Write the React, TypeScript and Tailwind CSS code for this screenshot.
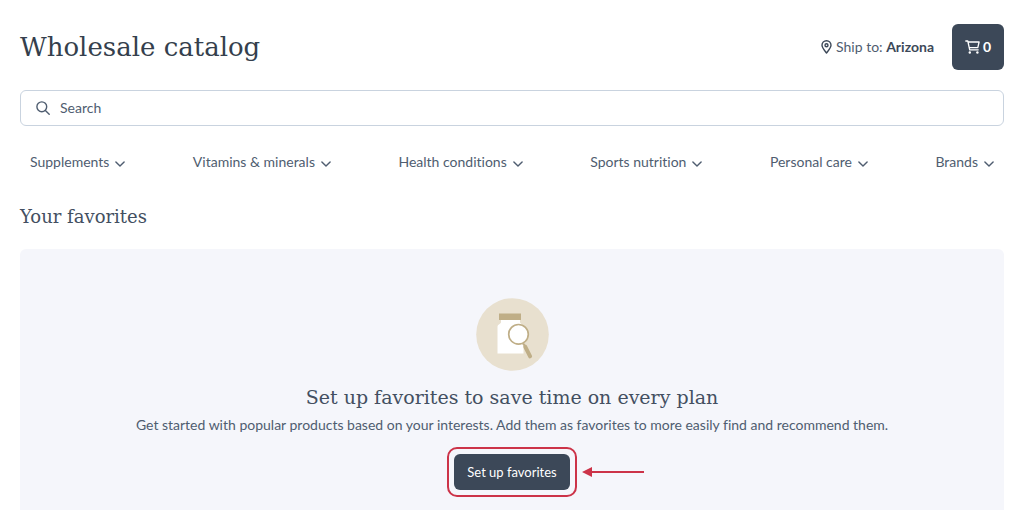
const categories = [
  "Supplements",
  "Vitamins & minerals",
  "Health conditions",
  "Sports nutrition",
  "Personal care",
  "Brands",
];

function PinIcon() {
  return (
    <svg className="h-[14px] w-[11px]" viewBox="0 0 11 14" fill="none" stroke="currentColor" strokeWidth="1.4" aria-hidden="true">
      <path d="M5.5 13C4.2 11.2 1 7.9 1 5.3a4.5 4.5 0 0 1 9 0C10 7.9 6.8 11.2 5.5 13Z" strokeLinejoin="round" />
      <circle cx="5.5" cy="5.2" r="1.5" />
    </svg>
  );
}

function CartIcon() {
  return (
    <svg className="h-[14px] w-[15px]" viewBox="0 0 15 14" fill="none" stroke="currentColor" strokeWidth="1.3" strokeLinecap="round" strokeLinejoin="round" aria-hidden="true">
      <path d="M.8 1h2l1.900 8.800h8.500M3.100 2h11l-1.300 5.600H4.300" />
      <circle cx="4.8" cy="12.5" r="1.2" fill="currentColor" stroke="none" />
      <circle cx="12.4" cy="12.5" r="1.2" fill="currentColor" stroke="none" />
    </svg>
  );
}

function SearchIcon() {
  return (
    <svg className="h-[14px] w-[14px]" viewBox="0 0 14 14" fill="none" stroke="currentColor" strokeWidth="1.4" strokeLinecap="round" aria-hidden="true">
      <circle cx="5.8" cy="5.8" r="4.9" />
      <path d="m9.400 9.400 3.800 3.800" />
    </svg>
  );
}

function ChevronIcon() {
  return (
    <svg className="mt-[3px] h-[6px] w-[10px]" viewBox="0 0 10 6" fill="none" stroke="currentColor" strokeWidth="1.4" strokeLinecap="round" strokeLinejoin="round" aria-hidden="true">
      <path d="m.9.900 4.100 4.200L9.100.900" />
    </svg>
  );
}

function JarIllustration() {
  return (
    <svg className="h-[73px] w-[73px]" viewBox="0 0 73 73" aria-hidden="true">
      <circle cx="36.5" cy="36.5" r="36.3" fill="#e8e0cf" />
      <path d="M25 22h19v2c0 2 3.500 2 3.500 5v26.500h-26V29c0-3 3.500-3 3.500-5Z" fill="#fff" />
      <path d="M23 15.500h22V22H23Z" fill="#bfae87" />
      <circle cx="42.5" cy="36.3" r="9.8" fill="#fff" stroke="#bfae87" strokeWidth="1.7" />
      <path d="m47 45.500 1.800 2.200" stroke="#bfae87" strokeWidth="2" />
      <path d="m49.300 48.800 4.800 9.500" stroke="#bfae87" strokeWidth="4" strokeLinecap="round" />
    </svg>
  );
}

export default function App() {
  return (
    <div className="flex min-h-screen flex-col bg-white px-5 pt-6 font-['Lato',sans-serif] text-sm leading-5 text-[#4f5d70] [font-variant-ligatures:none]">
      <header className="flex items-center justify-between">
        <h1 className="font-['DejaVu_Serif',serif] text-[26px] leading-10 text-[#353f4d]">Wholesale catalog</h1>
        <div className="flex items-center gap-[18px]">
          <button type="button" className="flex items-center gap-1">
            <span className="text-[#3c4858]"><PinIcon /></span>
            <span>Ship to: <strong className="font-bold text-[#3c4858]">Arizona</strong></span>
          </button>
          <button type="button" aria-label="Cart, 0 items" className="flex h-[46px] w-[52px] items-center justify-center gap-[3px] rounded-md bg-[#3c4858] font-bold text-white">
            <CartIcon />
            <span>0</span>
          </button>
        </div>
      </header>

      <label className="mt-5 flex h-9 items-center gap-[10px] rounded-md border border-[#c9d3df] px-[15px]">
        <SearchIcon />
        <input type="search" aria-label="Search" placeholder="Search" className="min-w-0 flex-1 bg-transparent outline-none placeholder:text-[#4f5d70] placeholder:opacity-100" />
      </label>

      <nav className="mt-[26px] flex justify-between px-[10px]">
        {categories.map((name) => (
          <button key={name} type="button" className="flex items-center gap-[6px] whitespace-nowrap">
            {name}
            <ChevronIcon />
          </button>
        ))}
      </nav>

      <h2 className="mt-[31px] font-['DejaVu_Serif',serif] text-lg leading-7 text-[#434f61]">Your favorites</h2>

      <section className="mt-[18px] flex flex-1 flex-col items-center rounded-t-md bg-[#f5f6fb] px-4 pt-[49px] pb-3">
        <JarIllustration />
        <h3 className="mt-[10px] text-center font-['DejaVu_Serif',serif] text-[19px] leading-8 text-[#434f61]">
          Set up favorites to save time on every plan
        </h3>
        <p className="mt-[2px] text-center">
          Get started with popular products based on your interests. Add them as favorites to more easily find and recommend them.
        </p>
        <div className="relative mt-3 rounded-[10px] border-2 border-[#cc3348] p-[5px]">
          <button type="button" className="flex h-9 w-[116px] items-center justify-center rounded-md bg-[#3c4858] text-[13px] whitespace-nowrap text-white">
            Set up favorites
          </button>
          <svg className="absolute top-[18px] left-full ml-[7px] h-[10px] w-[62px]" viewBox="0 0 62 10" fill="#cc3348" aria-hidden="true">
            <path d="M0 5 10 0v4h52v2H10v4Z" />
          </svg>
        </div>
      </section>
    </div>
  );
}
